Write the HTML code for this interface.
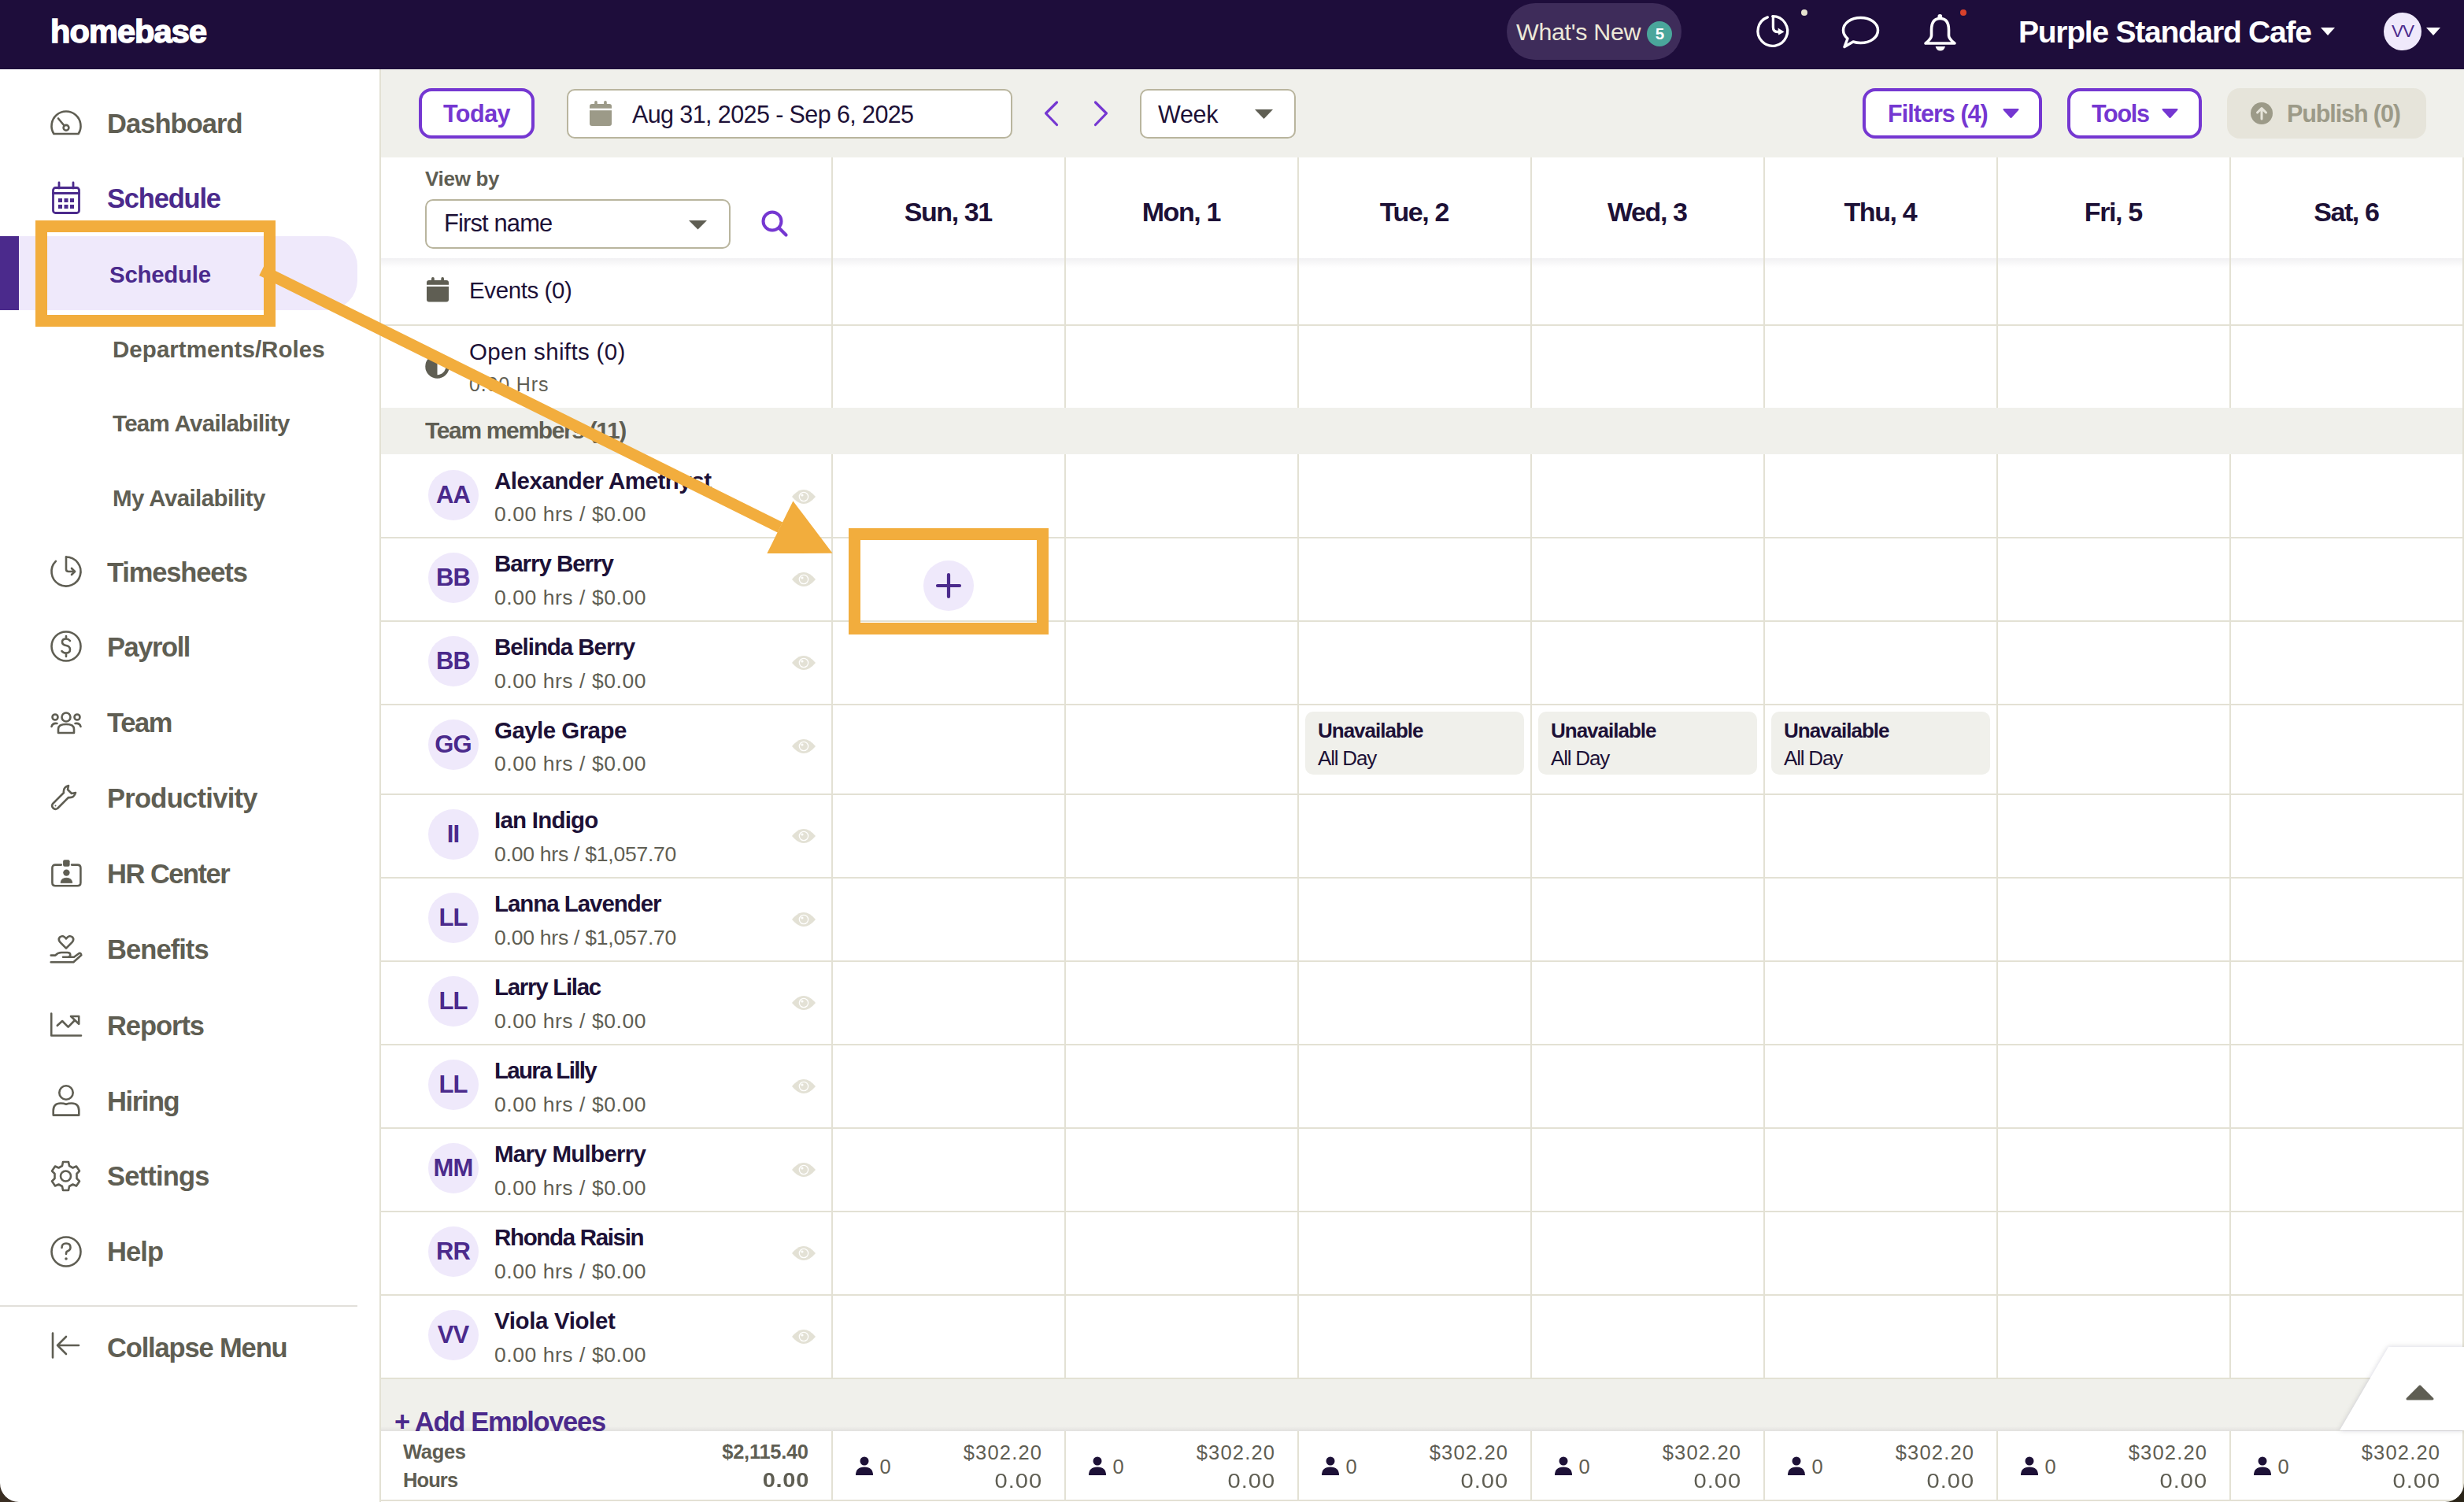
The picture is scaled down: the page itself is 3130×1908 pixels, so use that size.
<!DOCTYPE html><html><head><meta charset="utf-8"><style>
html,body{margin:0;padding:0;width:3130px;height:1908px;overflow:hidden;background:#fff;font-family:"Liberation Sans", sans-serif;}
.t{position:absolute;line-height:1;white-space:nowrap;font-family:"Liberation Sans", sans-serif;}
svg{overflow:visible}
</style></head><body>
<div style="position:absolute;left:0px;top:0px;width:3130px;height:88px;background:#1e0d3b"></div>
<div class="t" style="left:64px;top:19.2px;font-size:41.5px;font-weight:700;color:#fff;letter-spacing:-0.9px;-webkit-text-stroke:1.5px #fff;">homebase</div>
<div style="position:absolute;left:1914px;top:4px;width:222px;height:72px;background:#3e2c5a;border-radius:36px"></div>
<div class="t" style="left:1926px;top:24.9px;font-size:30.4px;font-weight:400;color:#ece8d8;letter-spacing:-0.3px;">What's New</div>
<div style="position:absolute;left:2092px;top:27px;width:32px;height:32px;background:#4aa69b;border-radius:50%"></div>
<div class="t" style="left:1608.5px;width:1000px;text-align:center;top:33.1px;font-size:20.5px;font-weight:700;color:#fff;letter-spacing:0px;">5</div>
<svg style="position:absolute;left:2231px;top:20px;" width="42" height="42" viewBox="0 0 42 42"><path d="M20.8 0.7 A18.8 18.8 0 1 1 14.37 1.83" fill="none" stroke="#fff" stroke-width="3.3" stroke-linecap="round"/><path d="M21.4 1 V14.5 Q21.4 20.5 27 20.5 H31" fill="none" stroke="#fff" stroke-width="3.3"/><path d="M27.6 15.6 L35.5 20.5 L28.2 24.6 Z" fill="#fff"/></svg>
<div style="position:absolute;left:2288px;top:12px;width:8px;height:8px;background:#e6e2cf;border-radius:50%"></div>
<svg style="position:absolute;left:2339px;top:20px;" width="49" height="42" viewBox="0 0 49 42"><path d="M24.5 2.5 C37 2.5 46.5 9.5 46.5 18.5 C46.5 27.5 37 34.5 24.5 34.5 C21 34.5 18 34 15 33 L4 39.5 L8 29 C4.5 26 2.5 22.5 2.5 18.5 C2.5 9.5 12 2.5 24.5 2.5 Z" fill="none" stroke="#fff" stroke-width="3.5" stroke-linejoin="round"/></svg>
<svg style="position:absolute;left:2443px;top:17px;" width="43" height="48" viewBox="0 0 43 48"><path d="M21.5 6.5 C13.5 6.5 10.5 12.5 10.5 21 V28 Q10.5 31 6.5 35 L3 38 H40 L36.5 35 Q32.5 31 32.5 28 V21 C32.5 12.5 29.5 6.5 21.5 6.5 Z" fill="none" stroke="#fff" stroke-width="3.6" stroke-linejoin="round"/><circle cx="21.3" cy="3.8" r="2.9" fill="#fff"/><path d="M15.6 41.9 H28 Q26.5 47.5 21.8 47.5 Q17 47.5 15.6 41.9 Z" fill="#fff"/></svg>
<div style="position:absolute;left:2490px;top:12px;width:8px;height:8px;background:#d9412b;border-radius:50%"></div>
<div class="t" style="left:2564px;top:20.9px;font-size:39px;font-weight:700;color:#fff;letter-spacing:-1.25px;">Purple Standard Cafe</div>
<svg style="position:absolute;left:2948px;top:35px;" width="18" height="11" viewBox="0 0 18 11"><path d="M0 0 H18 L9 10 Z" fill="#fff"/></svg>
<div style="position:absolute;left:3028px;top:16px;width:48px;height:48px;background:#efe9fb;border-radius:50%"></div>
<div class="t" style="left:2552.0px;width:1000px;text-align:center;top:28.9px;font-size:22.5px;font-weight:400;color:#4b2a8c;letter-spacing:-1.0px;">VV</div>
<svg style="position:absolute;left:3082px;top:35px;" width="18" height="11" viewBox="0 0 18 11"><path d="M0 0 H18 L9 10 Z" fill="#fff"/></svg>
<div style="position:absolute;left:482px;top:88px;width:2px;height:1820px;background:#e3e1d4"></div>
<div style="position:absolute;left:0px;top:300px;width:454px;height:94px;background:#efe9fb;border-radius:0 38px 38px 0"></div>
<div style="position:absolute;left:0px;top:300px;width:24px;height:94px;background:#4b2a8c"></div>
<div class="t" style="left:136px;top:139.7px;font-size:34.5px;font-weight:700;color:#5f5e53;letter-spacing:-0.95px;">Dashboard</div>
<div class="t" style="left:136px;top:234.7px;font-size:34.5px;font-weight:700;color:#4b2a8c;letter-spacing:-1.2px;">Schedule</div>
<div class="t" style="left:136px;top:709.7px;font-size:34.5px;font-weight:700;color:#5f5e53;letter-spacing:-1.15px;">Timesheets</div>
<div class="t" style="left:136px;top:804.7px;font-size:34.5px;font-weight:700;color:#5f5e53;letter-spacing:-1.45px;">Payroll</div>
<div class="t" style="left:136px;top:901.3px;font-size:34.5px;font-weight:700;color:#5f5e53;letter-spacing:-1.37px;">Team</div>
<div class="t" style="left:136px;top:996.7px;font-size:34.5px;font-weight:700;color:#5f5e53;letter-spacing:-0.72px;">Productivity</div>
<div class="t" style="left:136px;top:1092.7px;font-size:34.5px;font-weight:700;color:#5f5e53;letter-spacing:-1.5px;">HR Center</div>
<div class="t" style="left:136px;top:1188.7px;font-size:34.5px;font-weight:700;color:#5f5e53;letter-spacing:-0.93px;">Benefits</div>
<div class="t" style="left:136px;top:1285.7px;font-size:34.5px;font-weight:700;color:#5f5e53;letter-spacing:-1.05px;">Reports</div>
<div class="t" style="left:136px;top:1381.7px;font-size:34.5px;font-weight:700;color:#5f5e53;letter-spacing:-1.4px;">Hiring</div>
<div class="t" style="left:136px;top:1476.7px;font-size:34.5px;font-weight:700;color:#5f5e53;letter-spacing:-0.8px;">Settings</div>
<div class="t" style="left:136px;top:1573.2px;font-size:34.5px;font-weight:700;color:#5f5e53;letter-spacing:-0.9px;">Help</div>
<div class="t" style="left:136px;top:1694.7px;font-size:34.5px;font-weight:700;color:#5f5e53;letter-spacing:-1.15px;">Collapse Menu</div>
<div class="t" style="left:139px;top:333.9px;font-size:29.5px;font-weight:700;color:#4b2a8c;letter-spacing:-0.3px;">Schedule</div>
<div class="t" style="left:143px;top:428.9px;font-size:29.5px;font-weight:700;color:#5f5e53;letter-spacing:0.05px;">Departments/Roles</div>
<div class="t" style="left:143px;top:522.9px;font-size:29.5px;font-weight:700;color:#5f5e53;letter-spacing:-0.7px;">Team Availability</div>
<div class="t" style="left:143px;top:617.9px;font-size:29.5px;font-weight:700;color:#5f5e53;letter-spacing:-0.6px;">My Availability</div>
<div style="position:absolute;left:0px;top:1658px;width:454px;height:2px;background:#e2e0da"></div>
<svg style="position:absolute;left:64px;top:140px;" width="40" height="32" viewBox="0 0 40 32"><path d="M4.4 30 A18.5 18.5 0 1 1 35.6 30 Z" fill="none" stroke="#5f5e53" stroke-width="2.6" stroke-linecap="round" stroke-linejoin="round" stroke-width="2.2"/><path d="M10 10.5 L17.5 19.5" fill="none" stroke="#5f5e53" stroke-width="2.6" stroke-linecap="round" stroke-linejoin="round" stroke-width="2.2"/><circle cx="20" cy="22.3" r="3.4" fill="none" stroke="#5f5e53" stroke-width="2.6" stroke-linecap="round" stroke-linejoin="round" stroke-width="2.2"/></svg>
<svg style="position:absolute;left:66px;top:232px;" width="36" height="39" viewBox="0 0 36 39"><rect x="1.5" y="6.5" width="33" height="32" rx="3" fill="none" stroke="#4b2a8c" stroke-width="2.8"/><path d="M1.5 13.5 H34.5 M9 0 V7 M27 0 V7" fill="none" stroke="#4b2a8c" stroke-width="2.8" stroke-linecap="round"/><g fill="#4b2a8c"><rect x="8" y="20" width="5" height="5"/><rect x="15.5" y="20" width="5" height="5"/><rect x="23" y="20" width="5" height="5"/><rect x="8" y="28" width="5" height="5"/><rect x="15.5" y="28" width="5" height="5"/><rect x="23" y="28" width="5" height="5"/></g></svg>
<svg style="position:absolute;left:64px;top:706px;" width="40" height="40" viewBox="0 0 40 40"><path d="M20 1.5 A18.5 18.5 0 1 1 6.9 6.9" fill="none" stroke="#5f5e53" stroke-width="2.6" stroke-linecap="round" stroke-linejoin="round"/><path d="M20 1.5 V17 Q20 20 23 20 H31" fill="none" stroke="#5f5e53" stroke-width="2.6" stroke-linecap="round" stroke-linejoin="round"/><path d="M27 16 L31 20 L27 24" fill="none" stroke="#5f5e53" stroke-width="2.6" stroke-linecap="round" stroke-linejoin="round"/></svg>
<svg style="position:absolute;left:64px;top:800px;" width="40" height="42" viewBox="0 0 40 42"><circle cx="20" cy="21" r="18.5" fill="none" stroke="#5f5e53" stroke-width="2.6" stroke-linecap="round" stroke-linejoin="round"/><path d="M25 14 Q23 11.5 20 11.5 Q15 11.5 15 15.5 Q15 19 20 20 Q25 21 25 25 Q25 29.5 20 29.5 Q16 29.5 14.5 27 M20 8 V11.5 M20 29.5 V34" fill="none" stroke="#5f5e53" stroke-width="2.6" stroke-linecap="round" stroke-linejoin="round"/></svg>
<svg style="position:absolute;left:64px;top:904px;" width="40" height="29" viewBox="0 0 40 29"><circle cx="20" cy="7" r="5.5" fill="none" stroke="#5f5e53" stroke-width="2.6" stroke-linecap="round" stroke-linejoin="round"/><circle cx="6" cy="7" r="3.5" fill="none" stroke="#5f5e53" stroke-width="2.6" stroke-linecap="round" stroke-linejoin="round"/><circle cx="34" cy="7" r="3.5" fill="none" stroke="#5f5e53" stroke-width="2.6" stroke-linecap="round" stroke-linejoin="round"/><path d="M10 27 V22 Q10 16 20 16 Q30 16 30 22 V27 Z" fill="none" stroke="#5f5e53" stroke-width="2.6" stroke-linecap="round" stroke-linejoin="round"/><path d="M1.5 19 Q3 14 8.5 15 M38.5 19 Q37 14 31.5 15" fill="none" stroke="#5f5e53" stroke-width="2.6" stroke-linecap="round" stroke-linejoin="round"/></svg>
<svg style="position:absolute;left:64px;top:995px;" width="35" height="35" viewBox="0 0 35 35"><path d="M23 3 Q16 5 17 12 L3 26 Q1 29 3.5 31.5 Q6 34 9 32 L23 18 Q30 19 32 12 L27 13 L22 8 L23 3 Z" fill="none" stroke="#5f5e53" stroke-width="2.6" stroke-linecap="round" stroke-linejoin="round"/><circle cx="6.5" cy="28.5" r="1" fill="#5f5e53"/></svg>
<svg style="position:absolute;left:64px;top:1092px;" width="40" height="36" viewBox="0 0 40 36"><path d="M13.8 6.6 H6.4 Q2.4 6.6 2.4 10.6 V29.2 Q2.4 33.2 6.4 33.2 H34.4 Q38.4 33.2 38.4 29.2 V10.6 Q38.4 6.6 34.4 6.6 H27.1" fill="none" stroke="#5f5e53" stroke-width="2.6" stroke-linecap="round" stroke-linejoin="round" stroke-width="2.8" stroke-linecap="butt"/><rect x="16.1" y="0.3" width="8.5" height="8.5" rx="2" fill="#5f5e53"/><circle cx="20.4" cy="16.6" r="4.2" fill="#5f5e53"/><path d="M13.1 29.6 Q13.5 23.3 20.4 23.3 Q27.3 23.3 27.8 29.6 Z" fill="#5f5e53" stroke="#5f5e53" stroke-width="0.8" stroke-linejoin="round"/></svg>
<svg style="position:absolute;left:64px;top:1188px;" width="40" height="38" viewBox="0 0 40 38"><path d="M20 16.6 L12.6 9.2 Q9.4 5.6 12 2.4 Q15.8 -0.8 20 4.4 Q24.2 -0.8 28 2.4 Q30.6 5.6 27.4 9.2 Z" fill="none" stroke="#5f5e53" stroke-width="2.6" stroke-linecap="round" stroke-linejoin="round" stroke-width="2.2"/><path d="M0.7 25.6 H6.3 Q9.5 22 14 22 H21.6 Q25.3 22 25.3 25 Q25.3 27.3 23 27.5 M16 27.8 H30 L36.5 23 Q38.5 22 39.3 25.3 L29.3 34.3 H0.7" fill="none" stroke="#5f5e53" stroke-width="2.6" stroke-linecap="round" stroke-linejoin="round" stroke-width="2.2"/></svg>
<svg style="position:absolute;left:64px;top:1286px;" width="40" height="32" viewBox="0 0 40 32"><path d="M1.2 1.6 V29.5 H39" fill="none" stroke="#5f5e53" stroke-width="2.6" stroke-linecap="round" stroke-linejoin="round" stroke-width="2.4"/><path d="M8.8 16.8 L15.1 11 L22.6 18.6 L30.5 10.5 M26 5 H36.2 V14.7 Z" fill="none" stroke="#5f5e53" stroke-width="2.6" stroke-linecap="round" stroke-linejoin="round" stroke-width="2.4"/></svg>
<svg style="position:absolute;left:66px;top:1378px;" width="36" height="42" viewBox="0 0 36 42"><circle cx="18" cy="10" r="8.7" fill="none" stroke="#5f5e53" stroke-width="2.6" stroke-linecap="round" stroke-linejoin="round" stroke-width="2.2"/><path d="M1.7 38.6 V33 Q1.7 23.5 11 23.5 Q15 23.5 18 24.8 Q21 23.5 25 23.5 Q34.3 23.5 34.3 33 V38.6 Z" fill="none" stroke="#5f5e53" stroke-width="2.6" stroke-linecap="round" stroke-linejoin="round" stroke-width="2.2"/></svg>
<svg style="position:absolute;left:64px;top:1474px;" width="39" height="40" viewBox="0 0 39 40"><path d="M16 2 H23 L24 7 L28.5 9.5 L33 7.5 L37 13.5 L33.5 17 V23 L37 26.5 L33 32.5 L28.5 30.5 L24 33 L23 38 H16 L15 33 L10.5 30.5 L6 32.5 L2 26.5 L5.5 23 V17 L2 13.5 L6 7.5 L10.5 9.5 L15 7 Z" fill="none" stroke="#5f5e53" stroke-width="2.6" stroke-linecap="round" stroke-linejoin="round"/><circle cx="19.5" cy="20" r="6.5" fill="none" stroke="#5f5e53" stroke-width="2.6" stroke-linecap="round" stroke-linejoin="round"/></svg>
<svg style="position:absolute;left:64px;top:1570px;" width="40" height="40" viewBox="0 0 40 40"><circle cx="20" cy="20" r="18.5" fill="none" stroke="#5f5e53" stroke-width="2.6" stroke-linecap="round" stroke-linejoin="round"/><path d="M14.5 15 Q14.5 9.5 20 9.5 Q25.5 9.5 25.5 14.5 Q25.5 18 21.5 19.5 Q20 20 20 23" fill="none" stroke="#5f5e53" stroke-width="2.6" stroke-linecap="round" stroke-linejoin="round"/><circle cx="20" cy="29" r="1.8" fill="#5f5e53"/></svg>
<svg style="position:absolute;left:65px;top:1692px;" width="37" height="34" viewBox="0 0 37 34"><path d="M2 1.5 V32.5 M8 17 H35 M19 6 L8 17 L19 28" fill="none" stroke="#5f5e53" stroke-width="2.6" stroke-linecap="round" stroke-linejoin="round"/></svg>
<div style="position:absolute;left:484px;top:88px;width:2646px;height:112px;background:#f0f0eb"></div>
<div style="position:absolute;left:532px;top:112px;width:147px;height:64px;box-sizing:border-box;border:4px solid #7537d1;border-radius:16px;background:#fff"></div>
<div class="t" style="left:563px;top:128.8px;font-size:30.5px;font-weight:700;color:#7537d1;letter-spacing:-0.5px;">Today</div>
<div style="position:absolute;left:720px;top:113px;width:566px;height:63px;box-sizing:border-box;border:2px solid #b9b59e;border-radius:10px;background:#fff"></div>
<svg style="position:absolute;left:747px;top:128px;" width="32" height="33" viewBox="0 0 32 33"><rect x="2" y="4" width="28" height="28" rx="3" fill="#9c9a88"/><rect x="2" y="9.7" width="28" height="2.5" fill="#fff"/><rect x="8.2" y="0" width="3.6" height="7" rx="1.8" fill="#9c9a88"/><rect x="20.1" y="0" width="3.7" height="7" rx="1.8" fill="#9c9a88"/></svg>
<div class="t" style="left:803px;top:130.4px;font-size:30.5px;font-weight:400;color:#1d1137;letter-spacing:-0.6px;">Aug 31, 2025 - Sep 6, 2025</div>
<svg style="position:absolute;left:1326px;top:128px;" width="19" height="33" viewBox="0 0 19 33"><path d="M16.5 2 L2.5 16 L16.5 30.5" fill="none" stroke="#7537d1" stroke-width="3.2" stroke-linecap="round" stroke-linejoin="round"/></svg>
<svg style="position:absolute;left:1389px;top:128px;" width="19" height="33" viewBox="0 0 19 33"><path d="M2.5 2 L16.5 16 L2.5 30.5" fill="none" stroke="#7537d1" stroke-width="3.2" stroke-linecap="round" stroke-linejoin="round"/></svg>
<div style="position:absolute;left:1448px;top:113px;width:198px;height:63px;box-sizing:border-box;border:2px solid #b9b59e;border-radius:10px;background:#fff"></div>
<div class="t" style="left:1471px;top:130.4px;font-size:30.5px;font-weight:400;color:#1d1137;letter-spacing:-0.3px;">Week</div>
<svg style="position:absolute;left:1594px;top:139px;" width="23" height="13" viewBox="0 0 23 13"><path d="M0 0 H23 L11.5 12 Z" fill="#5f5e53"/></svg>
<div style="position:absolute;left:2366px;top:112px;width:228px;height:64px;box-sizing:border-box;border:4px solid #7537d1;border-radius:16px;background:#fff"></div>
<div class="t" style="left:2398px;top:128.8px;font-size:30.5px;font-weight:700;color:#7537d1;letter-spacing:-0.95px;">Filters (4)</div>
<svg style="position:absolute;left:2544px;top:138px;" width="21" height="13" viewBox="0 0 21 13"><path d="M1.5 1 H19.5 L10.5 11 Z" fill="#7537d1" stroke="#7537d1" stroke-width="2" stroke-linejoin="round"/></svg>
<div style="position:absolute;left:2626px;top:112px;width:171px;height:64px;box-sizing:border-box;border:4px solid #7537d1;border-radius:16px;background:#fff"></div>
<div class="t" style="left:2657px;top:128.8px;font-size:30.5px;font-weight:700;color:#7537d1;letter-spacing:-1.3px;">Tools</div>
<svg style="position:absolute;left:2746px;top:138px;" width="21" height="13" viewBox="0 0 21 13"><path d="M1.5 1 H19.5 L10.5 11 Z" fill="#7537d1" stroke="#7537d1" stroke-width="2" stroke-linejoin="round"/></svg>
<div style="position:absolute;left:2829px;top:112px;width:253px;height:64px;background:#e6e4da;border-radius:16px"></div>
<svg style="position:absolute;left:2859px;top:130px;" width="28" height="28" viewBox="0 0 28 28"><circle cx="14" cy="14" r="14" fill="#9c9a88"/><path d="M14 21 V8 M8.5 13 L14 7.5 L19.5 13" fill="none" stroke="#e6e4da" stroke-width="3" stroke-linecap="round" stroke-linejoin="round"/></svg>
<div class="t" style="left:2905px;top:128.8px;font-size:30.5px;font-weight:700;color:#9c9a88;letter-spacing:-1.1px;">Publish (0)</div>
<div style="position:absolute;left:484px;top:328px;width:2646px;height:12px;background:linear-gradient(rgba(60,50,80,0.07),rgba(60,50,80,0))"></div>
<div class="t" style="left:540px;top:213.9px;font-size:26px;font-weight:700;color:#5f5e53;letter-spacing:-0.3px;">View by</div>
<div style="position:absolute;left:540px;top:253px;width:388px;height:63px;box-sizing:border-box;border:2px solid #b9b59e;border-radius:10px;background:#fff"></div>
<div class="t" style="left:564px;top:268.5px;font-size:30.9px;font-weight:400;color:#1d1137;letter-spacing:-0.85px;">First name</div>
<svg style="position:absolute;left:875px;top:280px;" width="23" height="12" viewBox="0 0 23 12"><path d="M0 0 H23 L11.5 11.5 Z" fill="#5f5e53"/></svg>
<svg style="position:absolute;left:966px;top:266px;" width="36" height="36" viewBox="0 0 36 36"><circle cx="15" cy="15" r="11.5" fill="none" stroke="#7537d1" stroke-width="4"/><path d="M23.5 23.5 L32.5 32.5" stroke="#7537d1" stroke-width="4.2" stroke-linecap="round"/></svg>
<div class="t" style="left:704.3px;width:1000px;text-align:center;top:252.1px;font-size:34px;font-weight:700;color:#1d1137;letter-spacing:-1.4px;">Sun, 31</div>
<div class="t" style="left:1000.3px;width:1000px;text-align:center;top:252.1px;font-size:34px;font-weight:700;color:#1d1137;letter-spacing:-1.4px;">Mon, 1</div>
<div class="t" style="left:1296.3px;width:1000px;text-align:center;top:252.1px;font-size:34px;font-weight:700;color:#1d1137;letter-spacing:-1.4px;">Tue, 2</div>
<div class="t" style="left:1592.3px;width:1000px;text-align:center;top:252.1px;font-size:34px;font-weight:700;color:#1d1137;letter-spacing:-1.4px;">Wed, 3</div>
<div class="t" style="left:1888.3px;width:1000px;text-align:center;top:252.1px;font-size:34px;font-weight:700;color:#1d1137;letter-spacing:-1.4px;">Thu, 4</div>
<div class="t" style="left:2184.3px;width:1000px;text-align:center;top:252.1px;font-size:34px;font-weight:700;color:#1d1137;letter-spacing:-1.4px;">Fri, 5</div>
<div class="t" style="left:2480.3px;width:1000px;text-align:center;top:252.1px;font-size:34px;font-weight:700;color:#1d1137;letter-spacing:-1.4px;">Sat, 6</div>
<div style="position:absolute;left:1056px;top:200px;width:2px;height:1551px;background:#e3e1d4"></div>
<div style="position:absolute;left:1352px;top:200px;width:2px;height:1551px;background:#e3e1d4"></div>
<div style="position:absolute;left:1648px;top:200px;width:2px;height:1551px;background:#e3e1d4"></div>
<div style="position:absolute;left:1944px;top:200px;width:2px;height:1551px;background:#e3e1d4"></div>
<div style="position:absolute;left:2240px;top:200px;width:2px;height:1551px;background:#e3e1d4"></div>
<div style="position:absolute;left:2536px;top:200px;width:2px;height:1551px;background:#e3e1d4"></div>
<div style="position:absolute;left:2832px;top:200px;width:2px;height:1551px;background:#e3e1d4"></div>
<div style="position:absolute;left:484px;top:411.5px;width:2646px;height:2.0px;background:#e3e1d4"></div>
<div style="position:absolute;left:484px;top:682px;width:2646px;height:2px;background:#e3e1d4"></div>
<div style="position:absolute;left:484px;top:788px;width:2646px;height:2px;background:#e3e1d4"></div>
<div style="position:absolute;left:484px;top:893.5px;width:2646px;height:2.0px;background:#e3e1d4"></div>
<div style="position:absolute;left:484px;top:1008px;width:2646px;height:2px;background:#e3e1d4"></div>
<div style="position:absolute;left:484px;top:1114px;width:2646px;height:2px;background:#e3e1d4"></div>
<div style="position:absolute;left:484px;top:1220px;width:2646px;height:2px;background:#e3e1d4"></div>
<div style="position:absolute;left:484px;top:1326px;width:2646px;height:2px;background:#e3e1d4"></div>
<div style="position:absolute;left:484px;top:1432px;width:2646px;height:2px;background:#e3e1d4"></div>
<div style="position:absolute;left:484px;top:1538px;width:2646px;height:2px;background:#e3e1d4"></div>
<div style="position:absolute;left:484px;top:1644px;width:2646px;height:2px;background:#e3e1d4"></div>
<div style="position:absolute;left:484px;top:1750px;width:2646px;height:2px;background:#e3e1d4"></div>
<svg style="position:absolute;left:542px;top:352px;" width="29" height="33" viewBox="0 0 29 33"><rect x="0" y="4" width="28" height="27.6" rx="3" fill="#5f5e53"/><rect x="0" y="9.8" width="28" height="2.2" fill="#fff"/><rect x="6" y="0" width="3.8" height="7" rx="1.9" fill="#5f5e53"/><rect x="18.3" y="0" width="3.7" height="7" rx="1.9" fill="#5f5e53"/></svg>
<div class="t" style="left:596px;top:353.9px;font-size:29.5px;font-weight:400;color:#1d1137;letter-spacing:-0.4px;">Events (0)</div>
<svg style="position:absolute;left:540px;top:450px;" width="31" height="31" viewBox="0 0 31 31"><circle cx="15.5" cy="15.5" r="13" fill="none" stroke="#5f5e53" stroke-width="4.5"/><path d="M15.5 2.5 A13 13 0 0 0 15.5 28.5 Z" fill="#5f5e53"/></svg>
<div class="t" style="left:596px;top:431.6px;font-size:29.5px;font-weight:400;color:#1d1137;letter-spacing:0.35px;">Open shifts (0)</div>
<div class="t" style="left:596px;top:476.1px;font-size:25px;font-weight:400;color:#5f5e53;letter-spacing:0.85px;">0.00 Hrs</div>
<div style="position:absolute;left:484px;top:518px;width:2646px;height:59px;background:#f0f0eb"></div>
<div class="t" style="left:540px;top:531.5px;font-size:30px;font-weight:700;color:#5f5e53;letter-spacing:-1.35px;">Team members (11)</div>
<div style="position:absolute;left:544px;top:596.5px;width:64px;height:64.0px;background:#efe9fb;border-radius:50%"></div>
<div class="t" style="left:75.6px;width:1000px;text-align:center;top:612.6px;font-size:31px;font-weight:700;color:#4b2a8c;letter-spacing:-0.8px;">AA</div>
<div class="t" style="left:628px;top:595.9px;font-size:29.5px;font-weight:700;color:#1d1137;letter-spacing:-0.48px;">Alexander Amethyst</div>
<div class="t" style="left:628px;top:640.0px;font-size:26.5px;font-weight:400;color:#5f5e53;letter-spacing:0.55px;">0.00 hrs / $0.00</div>
<svg style="position:absolute;left:1006px;top:620.5px;" width="30" height="20.0" viewBox="0 0 30 20.0"><path d="M0 10 Q15 -8 30 10 Q15 28 0 10 Z" fill="#e3e1d5"/><circle cx="15" cy="10" r="6.3" fill="#fff"/><circle cx="15" cy="10" r="5" fill="#e3e1d5"/><circle cx="13" cy="8" r="1.6" fill="#fff"/></svg>
<div style="position:absolute;left:544px;top:702px;width:64px;height:64px;background:#efe9fb;border-radius:50%"></div>
<div class="t" style="left:75.6px;width:1000px;text-align:center;top:718.1px;font-size:31px;font-weight:700;color:#4b2a8c;letter-spacing:-0.8px;">BB</div>
<div class="t" style="left:628px;top:701.4px;font-size:29.5px;font-weight:700;color:#1d1137;letter-spacing:-1.05px;">Barry Berry</div>
<div class="t" style="left:628px;top:745.5px;font-size:26.5px;font-weight:400;color:#5f5e53;letter-spacing:0.55px;">0.00 hrs / $0.00</div>
<svg style="position:absolute;left:1006px;top:726px;" width="30" height="20" viewBox="0 0 30 20"><path d="M0 10 Q15 -8 30 10 Q15 28 0 10 Z" fill="#e3e1d5"/><circle cx="15" cy="10" r="6.3" fill="#fff"/><circle cx="15" cy="10" r="5" fill="#e3e1d5"/><circle cx="13" cy="8" r="1.6" fill="#fff"/></svg>
<div style="position:absolute;left:544px;top:808px;width:64px;height:64px;background:#efe9fb;border-radius:50%"></div>
<div class="t" style="left:75.6px;width:1000px;text-align:center;top:824.1px;font-size:31px;font-weight:700;color:#4b2a8c;letter-spacing:-0.8px;">BB</div>
<div class="t" style="left:628px;top:807.4px;font-size:29.5px;font-weight:700;color:#1d1137;letter-spacing:-1.05px;">Belinda Berry</div>
<div class="t" style="left:628px;top:851.5px;font-size:26.5px;font-weight:400;color:#5f5e53;letter-spacing:0.55px;">0.00 hrs / $0.00</div>
<svg style="position:absolute;left:1006px;top:832px;" width="30" height="20" viewBox="0 0 30 20"><path d="M0 10 Q15 -8 30 10 Q15 28 0 10 Z" fill="#e3e1d5"/><circle cx="15" cy="10" r="6.3" fill="#fff"/><circle cx="15" cy="10" r="5" fill="#e3e1d5"/><circle cx="13" cy="8" r="1.6" fill="#fff"/></svg>
<div style="position:absolute;left:544px;top:913.5px;width:64px;height:64.0px;background:#efe9fb;border-radius:50%"></div>
<div class="t" style="left:75.6px;width:1000px;text-align:center;top:929.6px;font-size:31px;font-weight:700;color:#4b2a8c;letter-spacing:-0.8px;">GG</div>
<div class="t" style="left:628px;top:912.9px;font-size:29.5px;font-weight:700;color:#1d1137;letter-spacing:-0.55px;">Gayle Grape</div>
<div class="t" style="left:628px;top:957.0px;font-size:26.5px;font-weight:400;color:#5f5e53;letter-spacing:0.55px;">0.00 hrs / $0.00</div>
<svg style="position:absolute;left:1006px;top:937.5px;" width="30" height="20.0" viewBox="0 0 30 20.0"><path d="M0 10 Q15 -8 30 10 Q15 28 0 10 Z" fill="#e3e1d5"/><circle cx="15" cy="10" r="6.3" fill="#fff"/><circle cx="15" cy="10" r="5" fill="#e3e1d5"/><circle cx="13" cy="8" r="1.6" fill="#fff"/></svg>
<div style="position:absolute;left:544px;top:1028px;width:64px;height:64px;background:#efe9fb;border-radius:50%"></div>
<div class="t" style="left:75.6px;width:1000px;text-align:center;top:1044.2px;font-size:31px;font-weight:700;color:#4b2a8c;letter-spacing:-0.8px;">II</div>
<div class="t" style="left:628px;top:1027.4px;font-size:29.5px;font-weight:700;color:#1d1137;letter-spacing:-0.77px;">Ian Indigo</div>
<div class="t" style="left:628px;top:1071.5px;font-size:26.5px;font-weight:400;color:#5f5e53;letter-spacing:-0.23px;">0.00 hrs / $1,057.70</div>
<svg style="position:absolute;left:1006px;top:1052px;" width="30" height="20" viewBox="0 0 30 20"><path d="M0 10 Q15 -8 30 10 Q15 28 0 10 Z" fill="#e3e1d5"/><circle cx="15" cy="10" r="6.3" fill="#fff"/><circle cx="15" cy="10" r="5" fill="#e3e1d5"/><circle cx="13" cy="8" r="1.6" fill="#fff"/></svg>
<div style="position:absolute;left:544px;top:1134px;width:64px;height:64px;background:#efe9fb;border-radius:50%"></div>
<div class="t" style="left:75.6px;width:1000px;text-align:center;top:1150.2px;font-size:31px;font-weight:700;color:#4b2a8c;letter-spacing:-0.8px;">LL</div>
<div class="t" style="left:628px;top:1133.4px;font-size:29.5px;font-weight:700;color:#1d1137;letter-spacing:-1.05px;">Lanna Lavender</div>
<div class="t" style="left:628px;top:1177.5px;font-size:26.5px;font-weight:400;color:#5f5e53;letter-spacing:-0.23px;">0.00 hrs / $1,057.70</div>
<svg style="position:absolute;left:1006px;top:1158px;" width="30" height="20" viewBox="0 0 30 20"><path d="M0 10 Q15 -8 30 10 Q15 28 0 10 Z" fill="#e3e1d5"/><circle cx="15" cy="10" r="6.3" fill="#fff"/><circle cx="15" cy="10" r="5" fill="#e3e1d5"/><circle cx="13" cy="8" r="1.6" fill="#fff"/></svg>
<div style="position:absolute;left:544px;top:1240px;width:64px;height:64px;background:#efe9fb;border-radius:50%"></div>
<div class="t" style="left:75.6px;width:1000px;text-align:center;top:1256.2px;font-size:31px;font-weight:700;color:#4b2a8c;letter-spacing:-0.8px;">LL</div>
<div class="t" style="left:628px;top:1239.4px;font-size:29.5px;font-weight:700;color:#1d1137;letter-spacing:-1.3px;">Larry Lilac</div>
<div class="t" style="left:628px;top:1283.5px;font-size:26.5px;font-weight:400;color:#5f5e53;letter-spacing:0.55px;">0.00 hrs / $0.00</div>
<svg style="position:absolute;left:1006px;top:1264px;" width="30" height="20" viewBox="0 0 30 20"><path d="M0 10 Q15 -8 30 10 Q15 28 0 10 Z" fill="#e3e1d5"/><circle cx="15" cy="10" r="6.3" fill="#fff"/><circle cx="15" cy="10" r="5" fill="#e3e1d5"/><circle cx="13" cy="8" r="1.6" fill="#fff"/></svg>
<div style="position:absolute;left:544px;top:1346px;width:64px;height:64px;background:#efe9fb;border-radius:50%"></div>
<div class="t" style="left:75.6px;width:1000px;text-align:center;top:1362.2px;font-size:31px;font-weight:700;color:#4b2a8c;letter-spacing:-0.8px;">LL</div>
<div class="t" style="left:628px;top:1345.4px;font-size:29.5px;font-weight:700;color:#1d1137;letter-spacing:-1.7px;">Laura Lilly</div>
<div class="t" style="left:628px;top:1389.5px;font-size:26.5px;font-weight:400;color:#5f5e53;letter-spacing:0.55px;">0.00 hrs / $0.00</div>
<svg style="position:absolute;left:1006px;top:1370px;" width="30" height="20" viewBox="0 0 30 20"><path d="M0 10 Q15 -8 30 10 Q15 28 0 10 Z" fill="#e3e1d5"/><circle cx="15" cy="10" r="6.3" fill="#fff"/><circle cx="15" cy="10" r="5" fill="#e3e1d5"/><circle cx="13" cy="8" r="1.6" fill="#fff"/></svg>
<div style="position:absolute;left:544px;top:1452px;width:64px;height:64px;background:#efe9fb;border-radius:50%"></div>
<div class="t" style="left:75.6px;width:1000px;text-align:center;top:1468.2px;font-size:31px;font-weight:700;color:#4b2a8c;letter-spacing:-0.8px;">MM</div>
<div class="t" style="left:628px;top:1451.4px;font-size:29.5px;font-weight:700;color:#1d1137;letter-spacing:-0.72px;">Mary Mulberry</div>
<div class="t" style="left:628px;top:1495.5px;font-size:26.5px;font-weight:400;color:#5f5e53;letter-spacing:0.55px;">0.00 hrs / $0.00</div>
<svg style="position:absolute;left:1006px;top:1476px;" width="30" height="20" viewBox="0 0 30 20"><path d="M0 10 Q15 -8 30 10 Q15 28 0 10 Z" fill="#e3e1d5"/><circle cx="15" cy="10" r="6.3" fill="#fff"/><circle cx="15" cy="10" r="5" fill="#e3e1d5"/><circle cx="13" cy="8" r="1.6" fill="#fff"/></svg>
<div style="position:absolute;left:544px;top:1558px;width:64px;height:64px;background:#efe9fb;border-radius:50%"></div>
<div class="t" style="left:75.6px;width:1000px;text-align:center;top:1574.2px;font-size:31px;font-weight:700;color:#4b2a8c;letter-spacing:-0.8px;">RR</div>
<div class="t" style="left:628px;top:1557.4px;font-size:29.5px;font-weight:700;color:#1d1137;letter-spacing:-1.33px;">Rhonda Raisin</div>
<div class="t" style="left:628px;top:1601.5px;font-size:26.5px;font-weight:400;color:#5f5e53;letter-spacing:0.55px;">0.00 hrs / $0.00</div>
<svg style="position:absolute;left:1006px;top:1582px;" width="30" height="20" viewBox="0 0 30 20"><path d="M0 10 Q15 -8 30 10 Q15 28 0 10 Z" fill="#e3e1d5"/><circle cx="15" cy="10" r="6.3" fill="#fff"/><circle cx="15" cy="10" r="5" fill="#e3e1d5"/><circle cx="13" cy="8" r="1.6" fill="#fff"/></svg>
<div style="position:absolute;left:544px;top:1664px;width:64px;height:64px;background:#efe9fb;border-radius:50%"></div>
<div class="t" style="left:75.6px;width:1000px;text-align:center;top:1680.2px;font-size:31px;font-weight:700;color:#4b2a8c;letter-spacing:-0.8px;">VV</div>
<div class="t" style="left:628px;top:1663.4px;font-size:29.5px;font-weight:700;color:#1d1137;letter-spacing:-0.38px;">Viola Violet</div>
<div class="t" style="left:628px;top:1707.5px;font-size:26.5px;font-weight:400;color:#5f5e53;letter-spacing:0.55px;">0.00 hrs / $0.00</div>
<svg style="position:absolute;left:1006px;top:1688px;" width="30" height="20" viewBox="0 0 30 20"><path d="M0 10 Q15 -8 30 10 Q15 28 0 10 Z" fill="#e3e1d5"/><circle cx="15" cy="10" r="6.3" fill="#fff"/><circle cx="15" cy="10" r="5" fill="#e3e1d5"/><circle cx="13" cy="8" r="1.6" fill="#fff"/></svg>
<div style="position:absolute;left:1658px;top:904px;width:278px;height:80px;background:#f0f0eb;border-radius:10px"></div>
<div class="t" style="left:1674px;top:914.9px;font-size:26px;font-weight:700;color:#1d1137;letter-spacing:-1.0px;">Unavailable</div>
<div class="t" style="left:1674px;top:949.9px;font-size:26px;font-weight:400;color:#1d1137;letter-spacing:-1.2px;">All Day</div>
<div style="position:absolute;left:1954px;top:904px;width:278px;height:80px;background:#f0f0eb;border-radius:10px"></div>
<div class="t" style="left:1970px;top:914.9px;font-size:26px;font-weight:700;color:#1d1137;letter-spacing:-1.0px;">Unavailable</div>
<div class="t" style="left:1970px;top:949.9px;font-size:26px;font-weight:400;color:#1d1137;letter-spacing:-1.2px;">All Day</div>
<div style="position:absolute;left:2250px;top:904px;width:278px;height:80px;background:#f0f0eb;border-radius:10px"></div>
<div class="t" style="left:2266px;top:914.9px;font-size:26px;font-weight:700;color:#1d1137;letter-spacing:-1.0px;">Unavailable</div>
<div class="t" style="left:2266px;top:949.9px;font-size:26px;font-weight:400;color:#1d1137;letter-spacing:-1.2px;">All Day</div>
<div style="position:absolute;left:1173px;top:712px;width:64px;height:64px;background:#efe9fb;border-radius:50%"></div>
<svg style="position:absolute;left:1189px;top:728px;" width="32" height="32" viewBox="0 0 32 32"><path d="M16 2 V30 M2 16 H30" stroke="#4b2a8c" stroke-width="4.2" stroke-linecap="round"/></svg>
<div style="position:absolute;left:484px;top:1752px;width:2646px;height:66px;background:#f0f0eb"></div>
<div class="t" style="left:501px;top:1788.7px;font-size:34.5px;font-weight:700;color:#4b2a8c;letter-spacing:-1.3px;height:31px;overflow:hidden;line-height:1;">+ Add Employees</div>
<div style="position:absolute;left:484px;top:1818px;width:2646px;height:90px;background:#fff"></div>
<div style="position:absolute;left:484px;top:1812px;width:2646px;height:6px;background:linear-gradient(rgba(60,50,80,0),rgba(60,50,80,0.08))"></div>
<div style="position:absolute;left:1056px;top:1818px;width:2px;height:88px;background:#e3e1d4"></div>
<div style="position:absolute;left:1352px;top:1818px;width:2px;height:88px;background:#e3e1d4"></div>
<div style="position:absolute;left:1648px;top:1818px;width:2px;height:88px;background:#e3e1d4"></div>
<div style="position:absolute;left:1944px;top:1818px;width:2px;height:88px;background:#e3e1d4"></div>
<div style="position:absolute;left:2240px;top:1818px;width:2px;height:88px;background:#e3e1d4"></div>
<div style="position:absolute;left:2536px;top:1818px;width:2px;height:88px;background:#e3e1d4"></div>
<div style="position:absolute;left:2832px;top:1818px;width:2px;height:88px;background:#e3e1d4"></div>
<div style="position:absolute;left:484px;top:1905px;width:2646px;height:2px;background:#e3e1d4"></div>
<div class="t" style="left:512px;top:1832.3px;font-size:25.5px;font-weight:700;color:#5f5e53;letter-spacing:-0.3px;">Wages</div>
<div class="t" style="left:512px;top:1867.8px;font-size:25.5px;font-weight:700;color:#5f5e53;letter-spacing:-0.9px;">Hours</div>
<div class="t" style="right:2103.3px;top:1832.3px;font-size:25.5px;font-weight:700;color:#5f5e53;letter-spacing:-0.3px;">$2,115.40</div>
<div class="t" style="right:2102.4px;top:1867.8px;font-size:25.5px;font-weight:700;color:#5f5e53;letter-spacing:0.6px;transform:scaleX(1.14);transform-origin:100% 50%;">0.00</div>
<svg style="position:absolute;left:1087px;top:1850px;" width="22" height="25" viewBox="0 0 22 25"><circle cx="11" cy="6" r="5.5" fill="#1d1137"/><path d="M0 24 Q0 13.5 11 13.5 Q22 13.5 22 24 Z" fill="#1d1137"/></svg>
<div class="t" style="left:1117.5px;top:1851.3px;font-size:25.5px;font-weight:400;color:#5f5e53;letter-spacing:0px;">0</div>
<div class="t" style="right:1805.8px;top:1832.8px;font-size:25.5px;font-weight:400;color:#5f5e53;letter-spacing:1.2px;">$302.20</div>
<div class="t" style="right:1806.1px;top:1868.6px;font-size:25.5px;font-weight:400;color:#5f5e53;letter-spacing:0.9px;transform:scaleX(1.14);transform-origin:100% 50%;">0.00</div>
<svg style="position:absolute;left:1383px;top:1850px;" width="22" height="25" viewBox="0 0 22 25"><circle cx="11" cy="6" r="5.5" fill="#1d1137"/><path d="M0 24 Q0 13.5 11 13.5 Q22 13.5 22 24 Z" fill="#1d1137"/></svg>
<div class="t" style="left:1413.5px;top:1851.3px;font-size:25.5px;font-weight:400;color:#5f5e53;letter-spacing:0px;">0</div>
<div class="t" style="right:1509.8px;top:1832.8px;font-size:25.5px;font-weight:400;color:#5f5e53;letter-spacing:1.2px;">$302.20</div>
<div class="t" style="right:1510.1px;top:1868.6px;font-size:25.5px;font-weight:400;color:#5f5e53;letter-spacing:0.9px;transform:scaleX(1.14);transform-origin:100% 50%;">0.00</div>
<svg style="position:absolute;left:1679px;top:1850px;" width="22" height="25" viewBox="0 0 22 25"><circle cx="11" cy="6" r="5.5" fill="#1d1137"/><path d="M0 24 Q0 13.5 11 13.5 Q22 13.5 22 24 Z" fill="#1d1137"/></svg>
<div class="t" style="left:1709.5px;top:1851.3px;font-size:25.5px;font-weight:400;color:#5f5e53;letter-spacing:0px;">0</div>
<div class="t" style="right:1213.8px;top:1832.8px;font-size:25.5px;font-weight:400;color:#5f5e53;letter-spacing:1.2px;">$302.20</div>
<div class="t" style="right:1214.1px;top:1868.6px;font-size:25.5px;font-weight:400;color:#5f5e53;letter-spacing:0.9px;transform:scaleX(1.14);transform-origin:100% 50%;">0.00</div>
<svg style="position:absolute;left:1975px;top:1850px;" width="22" height="25" viewBox="0 0 22 25"><circle cx="11" cy="6" r="5.5" fill="#1d1137"/><path d="M0 24 Q0 13.5 11 13.5 Q22 13.5 22 24 Z" fill="#1d1137"/></svg>
<div class="t" style="left:2005.5px;top:1851.3px;font-size:25.5px;font-weight:400;color:#5f5e53;letter-spacing:0px;">0</div>
<div class="t" style="right:917.8px;top:1832.8px;font-size:25.5px;font-weight:400;color:#5f5e53;letter-spacing:1.2px;">$302.20</div>
<div class="t" style="right:918.1px;top:1868.6px;font-size:25.5px;font-weight:400;color:#5f5e53;letter-spacing:0.9px;transform:scaleX(1.14);transform-origin:100% 50%;">0.00</div>
<svg style="position:absolute;left:2271px;top:1850px;" width="22" height="25" viewBox="0 0 22 25"><circle cx="11" cy="6" r="5.5" fill="#1d1137"/><path d="M0 24 Q0 13.5 11 13.5 Q22 13.5 22 24 Z" fill="#1d1137"/></svg>
<div class="t" style="left:2301.5px;top:1851.3px;font-size:25.5px;font-weight:400;color:#5f5e53;letter-spacing:0px;">0</div>
<div class="t" style="right:621.8px;top:1832.8px;font-size:25.5px;font-weight:400;color:#5f5e53;letter-spacing:1.2px;">$302.20</div>
<div class="t" style="right:622.1px;top:1868.6px;font-size:25.5px;font-weight:400;color:#5f5e53;letter-spacing:0.9px;transform:scaleX(1.14);transform-origin:100% 50%;">0.00</div>
<svg style="position:absolute;left:2567px;top:1850px;" width="22" height="25" viewBox="0 0 22 25"><circle cx="11" cy="6" r="5.5" fill="#1d1137"/><path d="M0 24 Q0 13.5 11 13.5 Q22 13.5 22 24 Z" fill="#1d1137"/></svg>
<div class="t" style="left:2597.5px;top:1851.3px;font-size:25.5px;font-weight:400;color:#5f5e53;letter-spacing:0px;">0</div>
<div class="t" style="right:325.8px;top:1832.8px;font-size:25.5px;font-weight:400;color:#5f5e53;letter-spacing:1.2px;">$302.20</div>
<div class="t" style="right:326.1px;top:1868.6px;font-size:25.5px;font-weight:400;color:#5f5e53;letter-spacing:0.9px;transform:scaleX(1.14);transform-origin:100% 50%;">0.00</div>
<svg style="position:absolute;left:2863px;top:1850px;" width="22" height="25" viewBox="0 0 22 25"><circle cx="11" cy="6" r="5.5" fill="#1d1137"/><path d="M0 24 Q0 13.5 11 13.5 Q22 13.5 22 24 Z" fill="#1d1137"/></svg>
<div class="t" style="left:2893.5px;top:1851.3px;font-size:25.5px;font-weight:400;color:#5f5e53;letter-spacing:0px;">0</div>
<div class="t" style="right:29.8px;top:1832.8px;font-size:25.5px;font-weight:400;color:#5f5e53;letter-spacing:1.2px;">$302.20</div>
<div class="t" style="right:30.1px;top:1868.6px;font-size:25.5px;font-weight:400;color:#5f5e53;letter-spacing:0.9px;transform:scaleX(1.14);transform-origin:100% 50%;">0.00</div>
<div style="position:absolute;left:3128px;top:200px;width:2px;height:1708px;background:#e3e1d4"></div>
<svg style="position:absolute;left:2950px;top:1700px;" width="180" height="120" viewBox="0 0 180 120"><defs><filter id="sh" x="-20%" y="-20%" width="140%" height="140%"><feGaussianBlur stdDeviation="3"/></filter></defs><path d="M84 11 H180 V117 H22 Z" fill="rgba(40,30,60,0.18)" filter="url(#sh)"/><path d="M84 11 H180 V117 H22 Z" fill="#fff"/><path d="M108 77 L124 61 L140 77 Z" fill="#5f5e53" stroke="#5f5e53" stroke-width="3" stroke-linejoin="round"/></svg>
<svg style="position:absolute;left:0px;top:1884px;" width="24" height="24" viewBox="0 0 24 24"><path d="M0 0 A24 24 0 0 0 24 24 H0 Z" fill="#3a2e22"/></svg>
<svg style="position:absolute;left:3106px;top:1884px;" width="24" height="24" viewBox="0 0 24 24"><path d="M24 0 A24 24 0 0 1 0 24 H24 Z" fill="#2a2418"/></svg>
<div style="position:absolute;left:45px;top:280px;width:305px;height:135px;box-sizing:border-box;border:15px solid #f2ad3d"></div>
<div style="position:absolute;left:1078px;top:671px;width:254px;height:135px;box-sizing:border-box;border:15px solid #f2ad3d"></div>
<svg style="position:absolute;left:0px;top:0px;pointer-events:none" width="3130" height="1908" viewBox="0 0 3130 1908"><path d="M332.5 343.5 L991 670" stroke="#f2ad3d" stroke-width="14.6"/><path d="M1007.4 636.4 L974.4 703.1 L1057.5 702.7 Z" fill="#f2ad3d"/></svg>
</body></html>
